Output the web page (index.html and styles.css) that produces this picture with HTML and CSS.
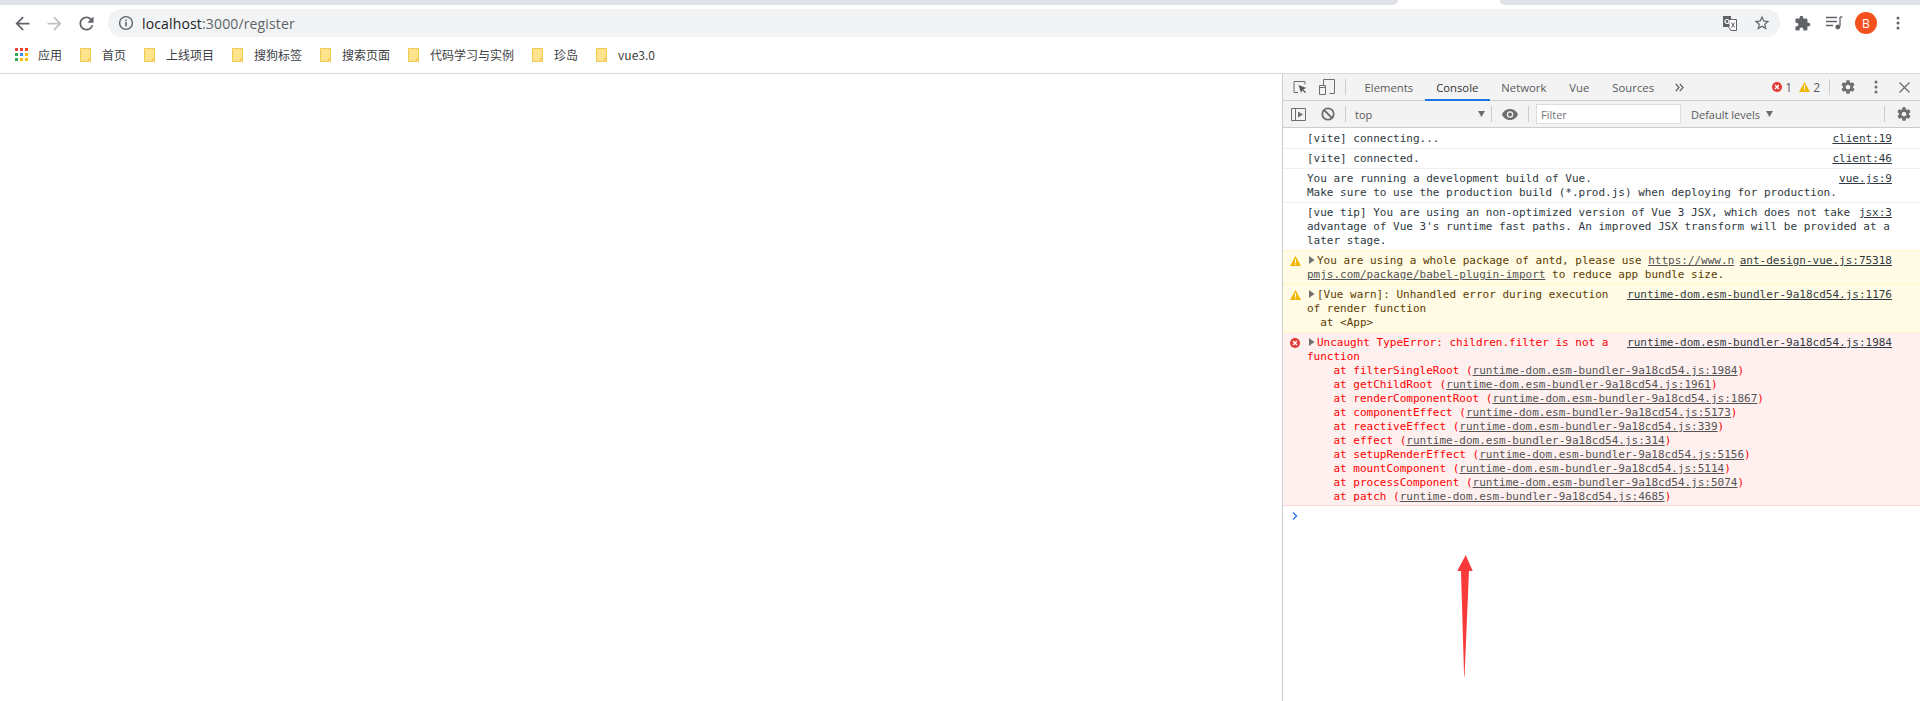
FILE: index.html
```html
<!DOCTYPE html>
<html lang="zh">
<head>
<meta charset="utf-8">
<title>localhost:3000/register</title>
<link rel="stylesheet" href="styles.css">
</head>
<body>
<div class="browser">
  <div class="tabstrip"><div class="tab-bg tab-left"></div><div class="tab-bg tab-right"></div></div>

  <div class="toolbar">
    <span class="tool"><svg width="21" height="21" viewBox="0 0 24 24"><path fill="#5f6368" d="M20 11H7.83l5.59-5.59L12 4l-8 8 8 8 1.41-1.41L7.83 13H20v-2z"/></svg></span>
    <span class="tool"><svg width="21" height="21" viewBox="0 0 24 24"><path fill="#bdc1c6" d="M4 11h12.17l-5.59-5.59L12 4l8 8-8 8-1.41-1.41L16.17 13H4v-2z"/></svg></span>
    <span class="tool"><svg width="21" height="21" viewBox="0 0 24 24"><path fill="#5f6368" d="M17.65 6.35A7.958 7.958 0 0 0 12 4c-4.42 0-7.99 3.58-7.99 8s3.57 8 7.99 8c3.73 0 6.84-2.55 7.73-6h-2.08A5.99 5.99 0 0 1 12 18c-3.31 0-6-2.69-6-6s2.69-6 6-6c1.66 0 3.14.69 4.22 1.78L13 11h7V4l-2.35 2.35z"/></svg></span>
    <div class="omnibox">
      <span class="info"><svg width="16" height="16" viewBox="0 0 16 16"><circle cx="8" cy="8" r="6.4" fill="none" stroke="#5f6368" stroke-width="1.4"/><rect x="7.2" y="7" width="1.6" height="4.4" fill="#5f6368"/><rect x="7.2" y="4.6" width="1.6" height="1.6" fill="#5f6368"/></svg></span>
      <span class="url"><span class="host">localhost</span>:3000/register</span>
      <span class="tool"><svg width="16" height="16" viewBox="0 0 16 16"><path fill="#5f6368" d="M1 1h8v11H1z"/><path fill="#fff" stroke="#5f6368" d="M7 4.5h7.5v11H9L7 12.500z"/><circle cx="5" cy="6.500" r="2" fill="none" stroke="#fff" stroke-width="1.200"/><path stroke="#5f6368" fill="none" d="M9.500 7.500l3 5m0-5l-3 5"/></svg></span>
      <span class="tool"><svg width="18" height="18" viewBox="0 0 24 24"><path fill="#5f6368" d="M22 9.240l-7.190-.62L12 2 9.190 8.630 2 9.240l5.460 4.730L5.820 21 12 17.270 18.180 21l-1.630-7.030L22 9.240zM12 15.400l-3.760 2.270 1-4.280-3.320-2.880 4.380-.38L12 6.100l1.710 4.040 4.380.38-3.320 2.880 1 4.280L12 15.400z"/></svg></span>
    </div>
    <div class="tool-right">
      <span class="tool"><svg width="17" height="17" viewBox="0 0 24 24"><path fill="#5f6368" d="M20.500 11H19V7c0-1.100-.9-2-2-2h-4V3.500C13 2.120 11.880 1 10.500 1S8 2.120 8 3.500V5H4c-1.100 0-1.990.9-1.990 2v3.800H3.500c1.490 0 2.700 1.210 2.700 2.700s-1.210 2.700-2.700 2.700H2V20c0 1.100.9 2 2 2h3.800v-1.500c0-1.490 1.210-2.700 2.700-2.700 1.490 0 2.700 1.210 2.700 2.700V22H17c1.100 0 2-.9 2-2v-4h1.500c1.380 0 2.500-1.120 2.500-2.500S21.880 11 20.500 11z"/></svg></span>
      <span class="tool"><svg width="17" height="14" viewBox="0 0 17 14"><path stroke="#5f6368" stroke-width="1.300" fill="none" d="M0 1.500h11M0 5.500h11M0 9.500h7M14 1v9.500"/><path stroke="#5f6368" stroke-width="1.300" fill="none" d="M14 1h2.500"/><circle cx="11.800" cy="11" r="2.400" fill="#5f6368"/></svg></span>
      <span class="tool"><span class="avatar">B</span></span>
      <span class="tool"><svg width="4" height="14" viewBox="0 0 4 14"><circle cx="2" cy="2" r="1.500" fill="#5f6368"/><circle cx="2" cy="7" r="1.500" fill="#5f6368"/><circle cx="2" cy="12" r="1.500" fill="#5f6368"/></svg></span>
    </div>
  </div>

  <div class="bookmarks">
    <span class="bm bm-apps">
      <svg width="13" height="13" viewBox="0 0 13 13"><rect width="3" height="3" fill="#ea4335"/><rect x="5" width="3" height="3" fill="#ea4335"/><rect x="10" width="3" height="3" fill="#ea4335"/><rect y="5" width="3" height="3" fill="#34a853"/><rect x="5" y="5" width="3" height="3" fill="#4285f4"/><rect x="10" y="5" width="3" height="3" fill="#fbbc04"/><rect y="10" width="3" height="3" fill="#34a853"/><rect x="5" y="10" width="3" height="3" fill="#fbbc04"/><rect x="10" y="10" width="3" height="3" fill="#fbbc04"/></svg>
      <span>应用</span>
    </span>
    <span class="bm"><svg class="folder" width="11" height="14" viewBox="0 0 11 14"><path d="M.5.500h10v13H.5z" fill="#fee38f" stroke="#f0c94e"/><path d="M8.500 13.500v-3h2" fill="none" stroke="#f0c94e"/></svg><span>首页</span></span>
    <span class="bm"><svg class="folder" width="11" height="14" viewBox="0 0 11 14"><path d="M.5.500h10v13H.5z" fill="#fee38f" stroke="#f0c94e"/><path d="M8.500 13.500v-3h2" fill="none" stroke="#f0c94e"/></svg><span>上线项目</span></span>
    <span class="bm"><svg class="folder" width="11" height="14" viewBox="0 0 11 14"><path d="M.5.500h10v13H.5z" fill="#fee38f" stroke="#f0c94e"/><path d="M8.500 13.500v-3h2" fill="none" stroke="#f0c94e"/></svg><span>搜狗标签</span></span>
    <span class="bm"><svg class="folder" width="11" height="14" viewBox="0 0 11 14"><path d="M.5.500h10v13H.5z" fill="#fee38f" stroke="#f0c94e"/><path d="M8.500 13.500v-3h2" fill="none" stroke="#f0c94e"/></svg><span>搜索页面</span></span>
    <span class="bm"><svg class="folder" width="11" height="14" viewBox="0 0 11 14"><path d="M.5.500h10v13H.5z" fill="#fee38f" stroke="#f0c94e"/><path d="M8.500 13.500v-3h2" fill="none" stroke="#f0c94e"/></svg><span>代码学习与实例</span></span>
    <span class="bm"><svg class="folder" width="11" height="14" viewBox="0 0 11 14"><path d="M.5.500h10v13H.5z" fill="#fee38f" stroke="#f0c94e"/><path d="M8.500 13.500v-3h2" fill="none" stroke="#f0c94e"/></svg><span>珍岛</span></span>
    <span class="bm"><svg class="folder" width="11" height="14" viewBox="0 0 11 14"><path d="M.5.500h10v13H.5z" fill="#fee38f" stroke="#f0c94e"/><path d="M8.500 13.500v-3h2" fill="none" stroke="#f0c94e"/></svg><span>vue3.0</span></span>
  </div>

  <div class="content">
    <div class="page"></div>
    <aside class="devtools">
      <div class="dt-tabs">
        <span class="dt-icon icon-inspect"><svg width="14" height="14" viewBox="0 0 14 14"><path d="M5 12.500H1V1.500h11v3" fill="none" stroke="#6e6e6e"/><path d="M5.500 5l8 3-3.300 1.200 2.800 2.800-1 1-2.800-2.800L8 13z" fill="#5a5a5a"/></svg></span>
        <span class="dt-icon icon-device"><svg width="16" height="16" viewBox="0 0 16 16"><path d="M4.500 6.500V.5h11v14h-5" fill="none" stroke="#6e6e6e"/><path d="M.5 6.500h6v9h-6zM.5 8.500h6" fill="none" stroke="#6e6e6e"/></svg></span>
        <span class="sep sep-tabs"></span>
        <span class="tab">Elements</span>
        <span class="tab tab-active">Console</span>
        <span class="tab">Network</span>
        <span class="tab">Vue</span>
        <span class="tab">Sources</span>
        <svg class="more" width="9" height="9" viewBox="0 0 9 9"><path d="M.8.800L4 4.500.8 8.200M4.800.800L8 4.500 4.800 8.200" fill="none" stroke="#5a5a5a" stroke-width="1.200"/></svg>
        <div class="dt-status">
          <svg class="badge" width="10" height="10" viewBox="0 0 10 10"><circle cx="5" cy="5" r="5" fill="#e53935"/><path d="M3 3l4 4m0-4l-4 4" stroke="#fff" stroke-width="1.500"/></svg>
          <span class="count">1</span>
          <svg class="badge badge-warn" width="11" height="10" viewBox="0 0 11 10"><path d="M5.500 0L11 10H0z" fill="#f2b600"/><path d="M5 3h1v4H5zM5 7.800h1v1H5z" fill="#fff"/></svg>
          <span class="count">2</span>
          <span class="sep sep-status"></span>
          <span class="dt-gear"><svg width="16" height="16" viewBox="0 0 24 24"><path fill="#6e6e6e" d="M19.430 12.980c.04-.32.07-.64.07-.98s-.03-.66-.07-.98l2.110-1.650c.19-.15.24-.42.12-.64l-2-3.460c-.12-.22-.39-.3-.61-.22l-2.490 1c-.52-.4-1.080-.73-1.690-.98l-.38-2.650C14.460 2.180 14.250 2 14 2h-4c-.25 0-.46.18-.49.42l-.38 2.650c-.61.25-1.170.59-1.690.98l-2.490-1c-.23-.09-.49 0-.61.22l-2 3.460c-.13.22-.07.49.12.64l2.110 1.650c-.04.32-.07.65-.07.98s.03.66.07.98l-2.110 1.650c-.19.15-.24.42-.12.64l2 3.460c.12.22.39.3.61.22l2.490-1c.52.4 1.080.73 1.690.98l.38 2.650c.03.24.24.42.49.42h4c.25 0 .46-.18.49-.42l.38-2.650c.61-.25 1.170-.59 1.690-.98l2.490 1c.23.09.49 0 .61-.22l2-3.460c.12-.22.07-.49-.12-.64l-2.110-1.650zM12 15.500c-1.930 0-3.500-1.570-3.500-3.500s1.570-3.500 3.500-3.500 3.500 1.570 3.500 3.500-1.570 3.500-3.500 3.500z"/></svg></span>
          <span class="dt-dots"><svg width="4" height="14" viewBox="0 0 4 14"><circle cx="2" cy="2" r="1.500" fill="#6e6e6e"/><circle cx="2" cy="7" r="1.500" fill="#6e6e6e"/><circle cx="2" cy="12" r="1.500" fill="#6e6e6e"/></svg></span>
          <span class="dt-close"><svg width="11" height="11" viewBox="0 0 11 11"><path d="M.5.500l10 10m0-10l-10 10" stroke="#6e6e6e" stroke-width="1.300"/></svg></span>
        </div>
      </div>

      <div class="dt-filter">
        <span class="dt-icon icon-sidebar"><svg width="15" height="13" viewBox="0 0 15 13"><path d="M.5.500h14v12H.5zM4.500.5v12" fill="none" stroke="#6e6e6e"/><path d="M7 3.500l5 3-5 3z" fill="#6e6e6e"/></svg></span>
        <span class="dt-icon icon-clear"><svg width="14" height="14" viewBox="0 0 14 14"><circle cx="7" cy="7" r="5.700" fill="none" stroke="#6e6e6e" stroke-width="1.800"/><path d="M3 3l8 8" stroke="#6e6e6e" stroke-width="1.800"/></svg></span>
        <span class="sep sep-clear"></span>
        <div class="context"><span class="bar-label">top</span><svg width="7" height="6" viewBox="0 0 7 6"><path d="M0 0h7L3.500 6z" fill="#6e6e6e"/></svg></div>
        <span class="sep"></span>
        <span class="dt-icon icon-eye"><svg width="16" height="11" viewBox="0 0 16 11"><path d="M8 0C4.400 0 1.400 2.200 0 5.500 1.400 8.800 4.400 11 8 11s6.600-2.200 8-5.500C14.600 2.200 11.600 0 8 0z" fill="#6e6e6e"/><circle cx="8" cy="5.500" r="3.200" fill="#f3f3f3"/><circle cx="8" cy="5.500" r="2" fill="#6e6e6e"/></svg></span>
        <span class="sep"></span>
        <div class="filter-box">Filter</div>
        <div class="levels"><span class="bar-label">Default levels</span><svg width="7" height="6" viewBox="0 0 7 6"><path d="M0 0h7L3.500 6z" fill="#6e6e6e"/></svg></div>
        <span class="sep sep-end"></span>
        <span class="dt-gear2"><svg width="16" height="16" viewBox="0 0 24 24"><path fill="#6e6e6e" d="M19.430 12.980c.04-.32.07-.64.07-.98s-.03-.66-.07-.98l2.110-1.650c.19-.15.24-.42.12-.64l-2-3.460c-.12-.22-.39-.3-.61-.22l-2.490 1c-.52-.4-1.080-.73-1.690-.98l-.38-2.650C14.460 2.180 14.250 2 14 2h-4c-.25 0-.46.18-.49.42l-.38 2.650c-.61.25-1.170.59-1.690.98l-2.490-1c-.23-.09-.49 0-.61.22l-2 3.460c-.13.22-.07.49.12.64l2.110 1.650c-.04.32-.07.65-.07.98s.03.66.07.98l-2.110 1.650c-.19.15-.24.42-.12.64l2 3.460c.12.22.39.3.61.22l2.490-1c.52.4 1.080.73 1.690.98l.38 2.650c.03.24.24.42.49.42h4c.25 0 .46-.18.49-.42l.38-2.650c.61-.25 1.170-.59 1.690-.98l2.490 1c.23.09.49 0 .61-.22l2-3.460c.12-.22.07-.49-.12-.64l-2.110-1.650zM12 15.500c-1.930 0-3.500-1.570-3.500-3.500s1.570-3.500 3.500-3.500 3.500 1.570 3.500 3.500-1.570 3.500-3.500 3.500z"/></svg></span>
      </div>

      <div class="console">
        <div class="msg msg-first"><div class="gutter"></div><div class="body"><a class="src">client:19</a><div class="ln">[vite] connecting...</div></div></div>
        <div class="msg"><div class="gutter"></div><div class="body"><a class="src">client:46</a><div class="ln">[vite] connected.</div></div></div>
        <div class="msg"><div class="gutter"></div><div class="body"><a class="src">vue.js:9</a><div class="ln">You are running a development build of Vue.</div><div class="ln">Make sure to use the production build (*.prod.js) when deploying for production.</div></div></div>
        <div class="msg msg-tip"><div class="gutter"></div><div class="body"><a class="src">jsx:3</a><div class="ln">[vue tip] You are using an non-optimized version of Vue 3 JSX, which does not take</div><div class="ln">advantage of Vue 3's runtime fast paths. An improved JSX transform will be provided at a</div><div class="ln">later stage.</div></div></div>
        <div class="msg msg-warn"><div class="gutter"><svg width="11" height="10" viewBox="0 0 11 10"><path d="M5.500 0L11 10H0z" fill="#f2b600"/><path d="M5 3h1v4H5zM5 7.800h1v1H5z" fill="#fff"/></svg></div><div class="body"><a class="src">ant-design-vue.js:75318</a><div class="ln"><svg class="caret" width="10" height="8" viewBox="0 0 10 8"><path d="M2 0l5.500 4L2 8z" fill="#727272"/></svg>You are using a whole package of antd, please use <a class="lnk">https://www.n</a></div><div class="ln"><a class="lnk">pmjs.com/package/babel-plugin-import</a> to reduce app bundle size.</div></div></div>
        <div class="msg msg-warn"><div class="gutter"><svg width="11" height="10" viewBox="0 0 11 10"><path d="M5.500 0L11 10H0z" fill="#f2b600"/><path d="M5 3h1v4H5zM5 7.800h1v1H5z" fill="#fff"/></svg></div><div class="body"><a class="src">runtime-dom.esm-bundler-9a18cd54.js:1176</a><div class="ln"><svg class="caret" width="10" height="8" viewBox="0 0 10 8"><path d="M2 0l5.500 4L2 8z" fill="#727272"/></svg>[Vue warn]: Unhandled error during execution</div><div class="ln">of render function</div><div class="ln">  at &lt;App&gt;</div></div></div>
        <div class="msg msg-error"><div class="gutter"><svg width="10" height="10" viewBox="0 0 10 10"><circle cx="5" cy="5" r="5" fill="#e53935"/><path d="M3 3l4 4m0-4l-4 4" stroke="#fff" stroke-width="1.500"/></svg></div><div class="body"><a class="src">runtime-dom.esm-bundler-9a18cd54.js:1984</a><div class="ln"><svg class="caret" width="10" height="8" viewBox="0 0 10 8"><path d="M2 0l5.500 4L2 8z" fill="#727272"/></svg>Uncaught TypeError: children.filter is not a</div><div class="ln">function</div><div class="ln">    at filterSingleRoot (<a class="lnk">runtime-dom.esm-bundler-9a18cd54.js:1984</a>)</div><div class="ln">    at getChildRoot (<a class="lnk">runtime-dom.esm-bundler-9a18cd54.js:1961</a>)</div><div class="ln">    at renderComponentRoot (<a class="lnk">runtime-dom.esm-bundler-9a18cd54.js:1867</a>)</div><div class="ln">    at componentEffect (<a class="lnk">runtime-dom.esm-bundler-9a18cd54.js:5173</a>)</div><div class="ln">    at reactiveEffect (<a class="lnk">runtime-dom.esm-bundler-9a18cd54.js:339</a>)</div><div class="ln">    at effect (<a class="lnk">runtime-dom.esm-bundler-9a18cd54.js:314</a>)</div><div class="ln">    at setupRenderEffect (<a class="lnk">runtime-dom.esm-bundler-9a18cd54.js:5156</a>)</div><div class="ln">    at mountComponent (<a class="lnk">runtime-dom.esm-bundler-9a18cd54.js:5114</a>)</div><div class="ln">    at processComponent (<a class="lnk">runtime-dom.esm-bundler-9a18cd54.js:5074</a>)</div><div class="ln">    at patch (<a class="lnk">runtime-dom.esm-bundler-9a18cd54.js:4685</a>)</div></div></div>
        <div class="prompt"><svg width="6" height="8" viewBox="0 0 6 8"><path d="M1 .5L4.500 4 1 7.500" fill="none" stroke="#367cf1" stroke-width="1.500"/></svg></div>
      </div>

      <svg class="annotation" width="20" height="126" viewBox="0 0 20 126"><path d="M9.700 1L16.700 17H13L8.500 122.700H8.100L5 17H1.300z" fill="#f93a3a"/></svg>
    </aside>
  </div>
</div>
</body>
</html>
```

FILE: styles.css
```css
* { box-sizing: border-box; }
html, body { margin: 0; height: 100%; background: #fff; overflow: hidden; }
body { font-family: "Open Sans", "Noto Sans CJK SC", sans-serif; color: #303942; }

.browser { display: flex; flex-direction: column; height: 701px; }

/* tab strip */
.tabstrip { display: flex; gap: 102px; height: 5px; flex: none; }
.tab-bg { background: #dee1e6; }
.tab-left { width: 1398px; border-bottom-right-radius: 6px; }
.tab-right { flex: 1; border-bottom-left-radius: 6px; }

/* toolbar */
.toolbar { display: flex; align-items: flex-start; height: 32px; padding: 4px 0 0 6px; flex: none; }
.tool { display: flex; align-items: center; justify-content: center; width: 32px; height: 28px; flex: none; }
.omnibox { display: flex; align-items: center; width: 1672px; height: 28px; margin-left: 6px; padding: 0 2px 0 10px; border-radius: 14px; background: #f1f3f4; }
.info { display: flex; margin-right: 8px; }
.url { flex: 1; font-size: 14px; color: #5f6368; letter-spacing: .15px; }
.host { color: #202124; }
.tool-right { display: flex; margin-left: 6px; }
.avatar { display: flex; align-items: center; justify-content: center; width: 22px; height: 22px; border-radius: 50%; background: #f4511e; color: #fff; font-size: 12px; }

/* bookmarks */
.bookmarks { display: flex; align-items: center; gap: 18px; height: 37px; padding: 0 0 1px 15px; border-bottom: 1px solid #d9dadc; flex: none; }
.bm { display: flex; align-items: center; gap: 11px; font-size: 12px; color: #3c4043; white-space: nowrap; font-family: "Noto Sans CJK SC", "Open Sans", sans-serif; }
.bm-apps { gap: 10px; }

/* main area */
.content { display: flex; flex: 1; min-height: 0; }
.page { flex: 1; background: #fff; }
.devtools { position: relative; width: 638px; border-left: 1px solid #ccc; display: flex; flex-direction: column; background: #fff; flex: none; }

.dt-tabs { display: flex; align-items: center; height: 27px; background: #f3f3f3; border-bottom: 1px solid #ccc; padding-left: 10px; flex: none; font-size: 11.300px; }
.dt-icon { display: flex; align-items: center; justify-content: center; flex: none; }
.icon-inspect { width: 14px; }
.icon-device { width: 16px; margin-left: 12px; }
.sep { width: 1px; height: 16px; background: #ccc; flex: none; }
.sep-tabs { margin: 0 7px 0 10px; }
.tab { display: flex; align-items: center; height: 27px; margin-bottom: -1px; padding: 0 11.500px; color: #5a5a5a; }
.tab-active { color: #333; border-bottom: 2px solid #1a73e8; padding-top: 2px; }
.more { margin-left: 9px; flex: none; }
.dt-status { display: flex; align-items: center; margin-left: auto; padding-right: 10px; }
.count { margin: 0 7px 0 3px; color: #5a5a5a; font-size: 12px; }
.sep-status { margin: 0 10px 0 2px; }
.dt-gear { display: flex; }
.dt-dots { display: flex; margin: 0 21px 0 18px; }
.dt-close { display: flex; }

.dt-filter { display: flex; align-items: center; height: 27px; background: #f3f3f3; border-bottom: 1px solid #ccc; padding-left: 8px; flex: none; font-size: 11px; color: #5a5a5a; }
.icon-sidebar { width: 15px; }
.icon-clear { width: 14px; margin-left: 15px; }
.sep-clear { margin-left: 10px; }
.context { display: flex; align-items: center; justify-content: space-between; width: 145px; padding: 0 6px 0 9px; font-size: 11px; }
.bar-label { padding-top: 1px; }
.icon-eye { width: 16px; margin: 0 10px; }
.filter-box { width: 145px; height: 20px; margin-left: 7px; padding-left: 4px; background: #fff; border: 1px solid #ddd; color: #757575; line-height: 20px; }
.levels { display: flex; align-items: center; gap: 6px; margin-left: 10px; }
.sep-end { margin-left: auto; }
.dt-gear2 { display: flex; margin: 0 8px 0 11px; }

/* console */
.console { flex: 1; font: 11px/14px "DejaVu Sans Mono", monospace; }
.msg { display: flex; padding: 3px 28px 2px 0; border-bottom: 1px solid #f0f0f0; color: #303942; }
.msg-first { padding-top: 4px; }
.msg-tip { border-bottom-color: #fff5c2; }
.gutter { display: flex; justify-content: center; width: 24px; padding-top: 2px; flex: none; }
.body { flex: 1; min-width: 0; }
.ln { white-space: pre; height: 14px; }
.src { float: right; color: #303942; text-decoration: underline; }
.lnk { color: #5a5a5a; text-decoration: underline; }
.msg-warn { background: #fffbe5; border-bottom-color: #fff5c2; color: #5c3b00; }
.msg-warn .lnk { color: #545454; }
.msg-error { padding-bottom: 1px; background: #fff0f0; border-bottom-color: #ffd6d6; color: #f00; }
.msg-error .lnk { color: #545454; }
.prompt { padding: 6px 0 0 9px; display: flex; }

.annotation { position: absolute; left: 173px; top: 480px; }
```
